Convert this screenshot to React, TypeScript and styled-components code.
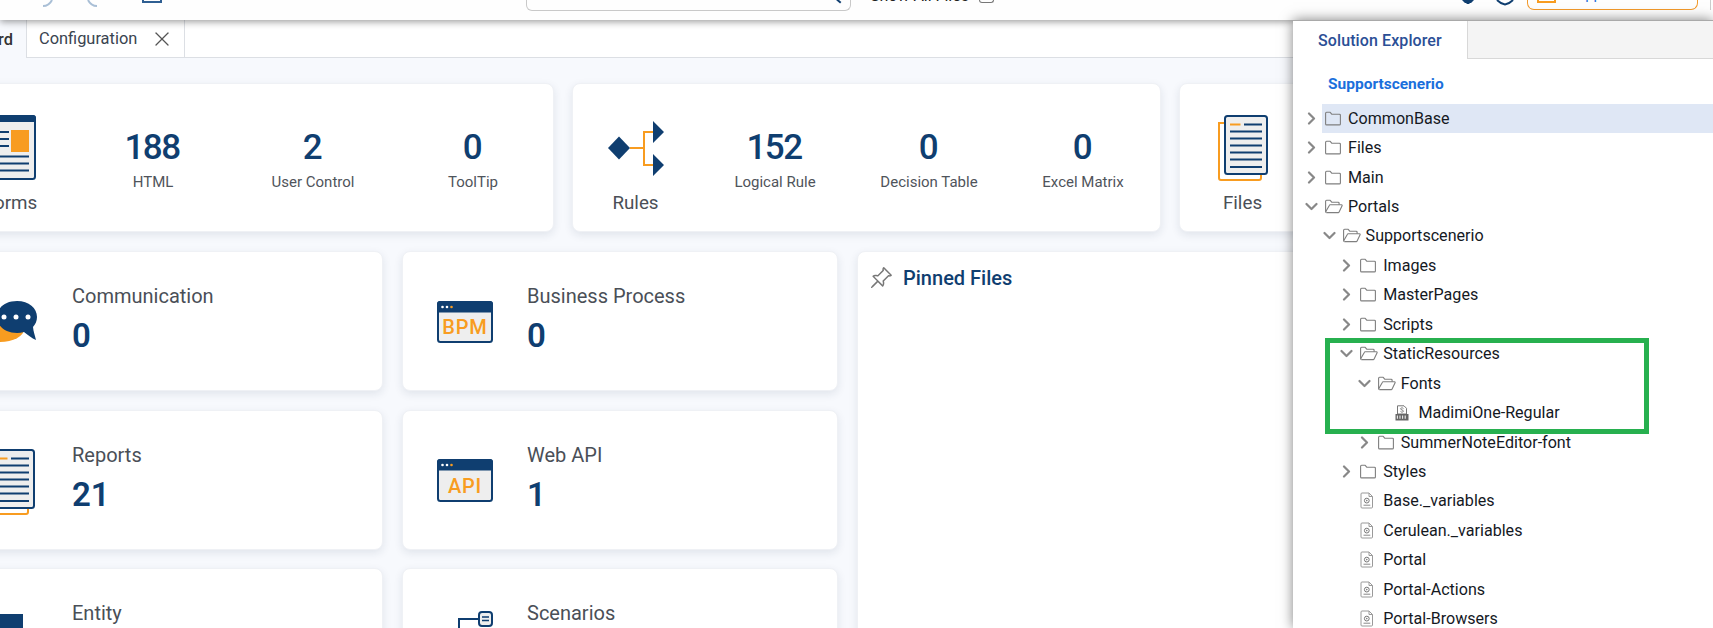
import React from "react";
import styled, { createGlobalStyle } from "styled-components";
import { BsPinAngle } from "react-icons/bs";
import { X } from "lucide-react";

const navy = "#0f3e70";
const orange = "#f89c20";

const Global = createGlobalStyle`
  html, body { margin: 0; padding: 0; height: 628px; overflow: hidden; background: #fff; }
  body { font-family: Roboto, "Liberation Sans", sans-serif; }
  * { box-sizing: border-box; }
`;

const Page = styled.div`
  width: 1713px;
  height: 628px;
  display: flex;
  flex-direction: column;
  overflow: hidden;
`;

const TopBar = styled.header`
  position: relative;
  z-index: 2;
  flex: none;
  height: 20px;
  background: #fefefe;
  box-shadow: 0 2px 7px rgba(0, 0, 0, 0.38);
  display: flex;
  align-items: flex-start;
  overflow: visible;
`;

const TopClip = styled.div`
  width: 100%;
  height: 20px;
  overflow: hidden;
  display: flex;
  align-items: flex-start;
`;

const NavArc = styled.svg<{ $left: number }>`
  flex: none;
  margin-left: ${(p) => p.$left}px;
  width: 11px;
  height: 7px;
`;

const SaveBox = styled.div`
  flex: none;
  width: 20px;
  height: 3px;
  margin-left: 44px;
  border: 2px solid #2f5f92;
  border-top: none;
`;

const SearchBox = styled.div`
  flex: none;
  width: 325px;
  height: 11px;
  margin-left: 364px;
  border: 1px solid #c9c9c9;
  border-top: none;
  border-radius: 0 0 6px 6px;
  display: flex;
  justify-content: flex-end;
  padding-right: 9px;
`;

const SearchTail = styled.div`
  width: 5px;
  height: 3px;
  border-bottom: 2px solid ${navy};
  transform: rotate(40deg) translateY(-1px);
`;

const ClippedLabel = styled.div`
  flex: none;
  margin-left: 19px;
  margin-top: -13px;
  font-size: 16px;
  line-height: 17px;
  color: #222;
`;

const ClippedCheck = styled.div`
  flex: none;
  width: 15px;
  height: 3px;
  margin-left: 10px;
  border: 1px solid #777;
  border-top: none;
  border-radius: 0 0 3px 3px;
`;

const GearStub = styled.svg`
  flex: none;
  width: 16px;
  height: 4px;
  margin-left: 466px;
`;

const ShieldStub = styled.svg`
  flex: none;
  width: 18px;
  height: 6px;
  margin-left: 20px;
`;

const AppButton = styled.div`
  flex: none;
  width: 171px;
  height: 10px;
  margin-left: 13px;
  border: 1px solid #f39a2b;
  border-top: none;
  border-radius: 0 0 7px 7px;
  display: flex;
  align-items: flex-start;
  padding-left: 9px;
  overflow: hidden;
`;

const AppButtonIcon = styled.div`
  flex: none;
  width: 19px;
  height: 3px;
  border: 2px solid ${orange};
  border-top: none;
`;

const AppButtonText = styled.div`
  margin-left: 12px;
  margin-top: -15px;
  font-size: 15px;
  line-height: 18px;
  color: #1a6fdc;
`;

const EdgeMark = styled.div`
  flex: none;
  width: 1px;
  height: 10px;
  margin-left: 12px;
  background: #ccc;
`;

const Workspace = styled.div`
  flex: 1;
  min-height: 0;
  display: flex;
`;

const Main = styled.main`
  flex: none;
  width: 1293px;
  overflow: hidden;
  display: flex;
  flex-direction: column;
  background: #f7f9fd;
`;

const TabStrip = styled.div`
  flex: none;
  height: 38px;
  display: flex;
  background: #fff;
  border-bottom: 1px solid #dcdfe4;
  margin-bottom: 25px;
`;

const ActiveTab = styled.div`
  flex: none;
  width: 26px;
  background: #f7f9fd;
  overflow: hidden;
  display: flex;
  justify-content: flex-end;
  align-items: center;
  padding-right: 13px;
  margin-bottom: -1px;
  font-size: 16.4px;
  color: #333;
  font-weight: 500;
  white-space: nowrap;
`;

const Tab = styled.div`
  flex: none;
  width: 159px;
  padding-left: 12px;
  display: flex;
  align-items: center;
  border-left: 1px solid #dcdfe4;
  border-right: 1px solid #dcdfe4;
  font-size: 16.4px;
  color: #3a4450;
  svg { margin-left: 13px; color: #555; }
`;

const Content = styled.div`
  margin-left: -53px;
  width: 1500px;
  display: flex;
  flex-direction: column;
  gap: 19px;
`;

const Card = styled.section`
  background: #fff;
  border: 1px solid #eff1f5;
  border-radius: 8px;
  box-shadow: 0 3px 8px rgba(30, 50, 80, 0.1);
`;

const SummaryRow = styled.div`
  display: grid;
  grid-template-columns: 607px 589px 500px;
  column-gap: 18px;
  height: 149px;
`;

const SummaryCard = styled(Card)`
  display: grid;
  grid-template-columns: 125px repeat(3, 1fr);
  align-items: start;
`;

const SummaryHead = styled.div`
  display: flex;
  flex-direction: column;
  align-items: center;
  padding-top: 31px;
  svg { display: block; height: 66px; }
`;

const SummaryTitle = styled.div`
  margin-top: 12px;
  font-size: 18.8px;
  line-height: 20px;
  color: #4a4f57;
`;

const Metric = styled.div`
  display: flex;
  flex-direction: column;
  align-items: center;
  padding-top: 43px;
`;

const MetricValue = styled.div`
  margin-right: 2px;
  font-size: 35px;
  line-height: 41px;
  font-weight: 500;
  letter-spacing: -1.5px;
  color: ${navy};
`;

const MetricLabel = styled.div`
  margin-top: 5px;
  font-size: 15px;
  line-height: 18px;
  color: #4f545b;
`;

const Board = styled.div`
  display: grid;
  grid-template-columns: 436px 436px 640px;
  column-gap: 19px;
  align-items: start;
`;

const Stack = styled.div`
  display: flex;
  flex-direction: column;
  gap: 18.5px;
`;

const ModuleCard = styled(Card)`
  height: 140px;
  display: flex;
  align-items: flex-start;
`;

const ModuleIcon = styled.div<{ $top: number }>`
  flex: none;
  width: 124px;
  padding-top: ${(p) => p.$top}px;
  display: flex;
  justify-content: center;
  svg { display: block; }
`;

const ModuleBody = styled.div`
  padding-top: 31px;
`;

const ModuleTitle = styled.div`
  font-size: 20px;
  line-height: 26px;
  color: #4a4f57;
`;

const ModuleValue = styled.div`
  margin-top: 8px;
  font-size: 33px;
  line-height: 38px;
  font-weight: 600;
  color: ${navy};
`;

const PinnedCard = styled(Card)`
  height: 500px;
  padding: 14px 0 0 11px;
`;

const PinnedHead = styled.div`
  display: flex;
  align-items: center;
  gap: 10px;
  font-size: 20px;
  font-weight: 500;
  line-height: 24px;
  color: ${navy};
  svg { color: #777; }
`;

const Panel = styled.aside`
  position: relative;
  z-index: 3;
  flex: none;
  width: 420px;
  margin-top: 0;
  background: #fff;
  border-top: 1px solid #a9a9a9;
  box-shadow: 0 0 12px rgba(0, 0, 0, 0.5);
  overflow: visible;
`;

const PanelTabs = styled.div`
  height: 38px;
  display: flex;
  background: #f4f4f4;
  border-bottom: 1px solid #d8d8d8;
`;

const PanelTab = styled.div`
  flex: none;
  width: 175px;
  margin-bottom: -1px;
  background: #fff;
  border-right: 1px solid #d8d8d8;
  padding-left: 25px;
  display: flex;
  align-items: center;
  font-size: 16px;
  font-weight: 500;
  letter-spacing: 0.1px;
  color: #2b4f96;
`;

const ProjectTitle = styled.div`
  height: 44.5px;
  padding: 14px 0 0 35px;
  font-size: 15.5px;
  line-height: 22px;
  font-weight: 700;
  color: #1a6fdc;
`;

const Tree = styled.div`
  position: relative;
  padding-left: 10px;
`;

const Row = styled.div<{ $level: number }>`
  height: 29.45px;
  display: flex;
  align-items: center;
  padding-left: ${(p) => p.$level * 17.6}px;
`;

const Twisty = styled.span`
  flex: none;
  width: 19px;
  display: flex;
  justify-content: flex-start;
  padding-left: 2px;
  color: #888;
  svg { display: block; }
`;

const RowLabel = styled.span<{ $selected?: boolean }>`
  flex: 1;
  height: 100%;
  display: flex;
  align-items: center;
  gap: 7px;
  padding-left: 3px;
  font-size: 16.1px;
  color: #15191f;
  white-space: nowrap;
  background: ${(p) => (p.$selected ? "#dfe7f5" : "transparent")};
`;

const GlyphSlot = styled.span`
  flex: none;
  width: 16px;
  display: flex;
  justify-content: flex-start;
  svg { flex: none; display: block; }
`;

const Callout = styled.div`
  position: absolute;
  left: 32px;
  top: 234.5px;
  width: 324px;
  height: 96px;
  border: 5px solid #27b04f;
  pointer-events: none;
`;

const Chevron = ({ open }: { open?: boolean }) => (
  <svg width="13" height="13" viewBox="0 0 13 13" fill="none" stroke="currentColor" strokeWidth="2.2" strokeLinecap="round" strokeLinejoin="round">
    {open ? <path d="M1.5 4 6.500 9l5-5" /> : <path d="M4 1.500 9 6.500l-5 5" />}
  </svg>
);

const FolderClosed = () => (
  <svg width="16" height="15" viewBox="0 0 16 15" fill="none" stroke="#7f7f7f" strokeWidth="1.1" strokeLinejoin="round">
    <path d="M.6 3V2.300a1 1 0 0 1 1-1h3.600l1.500 1.900h7.700a1 1 0 0 1 1 1v8.700a1 1 0 0 1-1 1H1.600a1 1 0 0 1-1-1Z" />
  </svg>
);

const FolderOpen = () => (
  <svg width="18" height="15" viewBox="0 0 18 15" fill="none" stroke="#7f7f7f" strokeWidth="1.1" strokeLinejoin="round">
    <path d="M1.600 13.600a1 1 0 0 1-1-1V2.300a1 1 0 0 1 1-1h3.600l1.500 1.900h6.400a1 1 0 0 1 1 1v1.600" />
    <path d="M1.600 13.600h11.600a1 1 0 0 0 .9-.6l3-6.200a.7.7 0 0 0-.6-1H5.200a1 1 0 0 0-.9.6L.7 12.800" />
  </svg>
);

const StyleFile = () => (
  <svg width="14" height="17" viewBox="0 0 14 17" fill="none" stroke="#9a9a9a" strokeWidth="1">
    <path d="M2 1h7l3.500 3.500V15a1 1 0 0 1-1 1H2a1 1 0 0 1-1-1V2a1 1 0 0 1 1-1Z" />
    <path d="M9 1v3.500h3.500" />
    <circle cx="6.800" cy="8.600" r="2.400" stroke="#777" />
    <circle cx="6.800" cy="8.600" r=".8" fill="#777" stroke="none" />
    <path d="M3.500 13.200h6.800" stroke="#888" />
  </svg>
);

const FontFile = () => (
  <svg width="14" height="16" viewBox="0 0 14 16" fill="none" stroke="#777" strokeWidth="1">
    <path d="M2.500.8h6.500l2.500 2.500V9h-9Z" />
    <path d="M8.500 3.600a1.600 1.200 0 0 0-3 .1c0 1.600 3 .9 3 2.600a1.600 1.200 0 0 1-3 .1" strokeWidth=".9" />
    <rect x=".5" y="9" width="13" height="6.500" fill="#666" stroke="none" />
    <path d="M2.400 10.600v3.200M5 10.600v3.200M7.600 10.600v3.200M10.200 10.600v3.200" stroke="#eee" strokeWidth="1.100" />
  </svg>
);

const PageIcon = () => (
  <svg width="50" height="66" viewBox="0 0 50 66">
    <path d="M1 8h40a2 2 0 0 1 2 2v53a2 2 0 0 1-2 2H3a2 2 0 0 1-2-2Z" fill="none" stroke={orange} strokeWidth="2" />
    <rect x="7" y="1" width="42" height="58" rx="2.500" fill="#eee" stroke={navy} strokeWidth="2" />
    <path d="M12 9.500h10.500" stroke={orange} strokeWidth="2" />
    <path d="M26 9.500h18M12 16.500h32M12 23.500h32M12 30.500h32M12 37.500h32M12 44.500h32M12 52h32" stroke={navy} strokeWidth="2" />
  </svg>
);

const FormIcon = () => (
  <svg width="50" height="66" viewBox="0 0 50 66">
    <rect x="1" y="1" width="48" height="63" rx="2.500" fill="#eee" stroke={navy} strokeWidth="2" />
    <path d="M0 3a3 3 0 0 1 3-3h44a3 3 0 0 1 3 3v4H0Z" fill={navy} />
    <rect x="25" y="15" width="18" height="22" fill={orange} />
    <path d="M6 17h17M6 24h17M6 31h17M6 41.500h37M6 48.500h37M6 55.500h37" stroke={navy} strokeWidth="2" />
  </svg>
);

const RuleIcon = () => (
  <svg width="58" height="66" viewBox="0 0 58 66">
    <path d="M23 33H37M46 17H37V50H46" fill="none" stroke={orange} strokeWidth="2" />
    <path d="M12 21.500 23 33 12 44.500 1 33Z" fill={navy} />
    <path d="M46 6 57 17 46 28ZM46 39 57 50 46 61Z" fill={navy} />
  </svg>
);

const ChatIcon = () => (
  <svg width="70" height="42" viewBox="1 0 70 42">
    <ellipse cx="26" cy="28" rx="24" ry="13" fill={orange} />
    <path d="M43 0c12 0 20 7 20 16 0 4-1.500 7-4 10 .3 4 2 9 3 13-4-1.700-9-5.500-12-8-2.300.7-4.500 1-7 1-12 0-20-7-20-16S31 0 43 0Z" fill={navy} />
    <circle cx="30" cy="16" r="2.500" fill="#fff" />
    <circle cx="42" cy="16" r="2.500" fill="#fff" />
    <circle cx="54" cy="16" r="2.500" fill="#fff" />
  </svg>
);

const WindowIcon = ({ label, height }: { label: string; height: number }) => (
  <svg width="56" height={height} viewBox={`0 0 56 ${height}`}>
    <rect x="1" y="1" width="54" height={height - 2} rx="2.500" fill="#eee" stroke={navy} strokeWidth="2" />
    <path d="M0 3a3 3 0 0 1 3-3h50a3 3 0 0 1 3 3v8.500H0Z" fill={navy} />
    <circle cx="5.500" cy="6" r="1.300" fill="#fff" />
    <circle cx="10" cy="6" r="1.300" fill="#fff" />
    <circle cx="14.500" cy="6" r="1.300" fill={orange} />
    <text x="28" y={height - 9.5} textAnchor="middle" fontFamily="Roboto, sans-serif" fontWeight="500" fontSize="20" letterSpacing=".8" fill={orange}>{label}</text>
  </svg>
);

const EntityIcon = () => (
  <svg width="56" height="40" viewBox="0 0 56 40">
    <rect x="0" y="0" width="41" height="40" fill={navy} />
  </svg>
);

const ScenarioIcon = () => (
  <svg width="56" height="40" viewBox="-21 0 56 40">
    <path d="M21 8H1v32" fill="none" stroke={navy} strokeWidth="2" />
    <rect x="21" y="1" width="13" height="14" rx="3" fill="#eee" stroke={navy} strokeWidth="2" />
    <path d="M24 6h7M24 9.500h7" stroke={navy} strokeWidth="1.500" />
  </svg>
);

type Node = { label: string; level: number; kind: "closed" | "open" | "style" | "font"; selected?: boolean };

const nodes: Node[] = [
  { label: "CommonBase", level: 0, kind: "closed", selected: true },
  { label: "Files", level: 0, kind: "closed" },
  { label: "Main", level: 0, kind: "closed" },
  { label: "Portals", level: 0, kind: "open" },
  { label: "Supportscenerio", level: 1, kind: "open" },
  { label: "Images", level: 2, kind: "closed" },
  { label: "MasterPages", level: 2, kind: "closed" },
  { label: "Scripts", level: 2, kind: "closed" },
  { label: "StaticResources", level: 2, kind: "open" },
  { label: "Fonts", level: 3, kind: "open" },
  { label: "MadimiOne-Regular", level: 4, kind: "font" },
  { label: "SummerNoteEditor-font", level: 3, kind: "closed" },
  { label: "Styles", level: 2, kind: "closed" },
  { label: "Base._variables", level: 2, kind: "style" },
  { label: "Cerulean._variables", level: 2, kind: "style" },
  { label: "Portal", level: 2, kind: "style" },
  { label: "Portal-Actions", level: 2, kind: "style" },
  { label: "Portal-Browsers", level: 2, kind: "style" },
];

const NodeGlyph = ({ kind }: { kind: Node["kind"] }) => {
  if (kind === "closed") return <FolderClosed />;
  if (kind === "open") return <FolderOpen />;
  if (kind === "font") return <FontFile />;
  return <StyleFile />;
};

const TreeRow = ({ node }: { node: Node }) => (
  <Row $level={node.level}>
    <Twisty>{node.kind === "closed" ? <Chevron /> : node.kind === "open" ? <Chevron open /> : null}</Twisty>
    <RowLabel $selected={node.selected}>
      <GlyphSlot><NodeGlyph kind={node.kind} /></GlyphSlot>
      {node.label}
    </RowLabel>
  </Row>
);

const summaries = [
  { title: "Forms", icon: <FormIcon />, metrics: [["188", "HTML"], ["2", "User Control"], ["0", "ToolTip"]] },
  { title: "Rules", icon: <RuleIcon />, metrics: [["152", "Logical Rule"], ["0", "Decision Table"], ["0", "Excel Matrix"]] },
  { title: "Files", icon: <PageIcon />, metrics: [] as string[][] },
];

const leftModules = [
  { title: "Communication", value: "0", top: 49, icon: <ChatIcon /> },
  { title: "Reports", value: "21", top: 38, icon: <PageIcon /> },
  { title: "Entity", value: "", top: 45, icon: <EntityIcon /> },
];

const rightModules = [
  { title: "Business Process", value: "0", top: 49, icon: <WindowIcon label="BPM" height={42} /> },
  { title: "Web API", value: "1", top: 48, icon: <WindowIcon label="API" height={43} /> },
  { title: "Scenarios", value: "", top: 42, icon: <ScenarioIcon /> },
];

const ModuleStack = ({ items }: { items: typeof leftModules }) => (
  <Stack>
    {items.map((m) => (
      <ModuleCard key={m.title}>
        <ModuleIcon $top={m.top}>{m.icon}</ModuleIcon>
        <ModuleBody>
          <ModuleTitle>{m.title}</ModuleTitle>
          {m.value && <ModuleValue>{m.value}</ModuleValue>}
        </ModuleBody>
      </ModuleCard>
    ))}
  </Stack>
);

export default function App() {
  return (
    <Page>
      <Global />
      <TopBar>
        <TopClip>
          <NavArc $left={42} viewBox="0 0 11 7" fill="none" stroke="#a9bfd6" strokeWidth="2"><path d="M1 6c4 0 7-2 9-6" /></NavArc>
          <NavArc $left={34} viewBox="0 0 11 7" fill="none" stroke="#a9bfd6" strokeWidth="2"><path d="M1 0c2 4 5 6 9 6" /></NavArc>
          <SaveBox />
          <SearchBox><SearchTail /></SearchBox>
          <ClippedLabel>Show All Files</ClippedLabel>
          <ClippedCheck />
          <GearStub viewBox="0 0 16 4" fill={navy}><path d="M2 0h12l-3 3H9.500v1h-3V3H5Z" /></GearStub>
          <ShieldStub viewBox="0 0 18 6" fill="none" stroke={navy} strokeWidth="2"><path d="M1 0c2 2 5 4 8 4.500C12 4 15 2 17 0" /></ShieldStub>
          <AppButton>
            <AppButtonIcon />
            <AppButtonText>Supportscenerio</AppButtonText>
          </AppButton>
          <EdgeMark />
        </TopClip>
      </TopBar>
      <Workspace>
        <Main>
          <TabStrip>
            <ActiveTab>Dashboard</ActiveTab>
            <Tab>Configuration<X size={24} strokeWidth={1.3} /></Tab>
          </TabStrip>
          <Content>
            <SummaryRow>
              {summaries.map((s) => (
                <SummaryCard key={s.title}>
                  <SummaryHead>
                    {s.icon}
                    <SummaryTitle>{s.title}</SummaryTitle>
                  </SummaryHead>
                  {s.metrics.map(([value, label]) => (
                    <Metric key={label}>
                      <MetricValue>{value}</MetricValue>
                      <MetricLabel>{label}</MetricLabel>
                    </Metric>
                  ))}
                </SummaryCard>
              ))}
            </SummaryRow>
            <Board>
              <ModuleStack items={leftModules} />
              <ModuleStack items={rightModules} />
              <PinnedCard>
                <PinnedHead><BsPinAngle size={24} />Pinned Files</PinnedHead>
              </PinnedCard>
            </Board>
          </Content>
        </Main>
        <Panel>
          <PanelTabs><PanelTab>Solution Explorer</PanelTab></PanelTabs>
          <ProjectTitle>Supportscenerio</ProjectTitle>
          <Tree>
            {nodes.map((n) => <TreeRow key={n.label + n.level} node={n} />)}
            <Callout />
          </Tree>
        </Panel>
      </Workspace>
    </Page>
  );
}
